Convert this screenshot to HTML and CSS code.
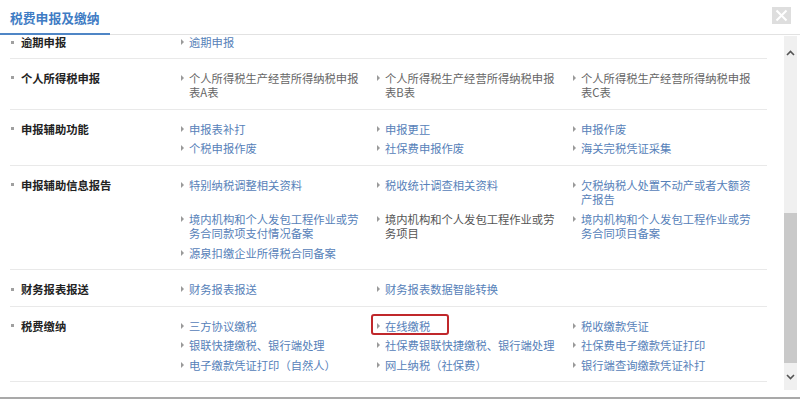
FILE: index.html
```html
<!DOCTYPE html>
<html lang="zh-CN">
<head>
<meta charset="utf-8">
<title>税费申报及缴纳</title>
<link rel="stylesheet" href="styles.css">
</head>
<body>
<div class="dialog">
  <div class="header">
    <div class="tab">税费申报及缴纳</div>
    <div class="close">
      <svg width="19" height="17" viewBox="0 0 19 17"><rect width="19" height="17" fill="#dedede"/><path d="M4.5 3.5 L14.5 13.5 M14.5 3.5 L4.5 13.5" stroke="#fff" stroke-width="2"/></svg>
    </div>
  </div>
  <div class="body">
    <div class="content">
      <div class="list">
        <div class="row first">
          <div class="label"><span class="sq"></span>逾期申报</div>
          <div class="grid">
            <div class="item"><span class="tri"></span><span class="t">逾期申报</span></div>
          </div>
        </div>
        <div class="row">
          <div class="label"><span class="sq"></span>个人所得税申报</div>
          <div class="grid">
            <div class="item gray"><span class="tri"></span><span class="t">个人所得税生产经营所得纳税申报表A表</span></div>
            <div class="item gray"><span class="tri"></span><span class="t">个人所得税生产经营所得纳税申报表B表</span></div>
            <div class="item gray"><span class="tri"></span><span class="t">个人所得税生产经营所得纳税申报表C表</span></div>
          </div>
        </div>
        <div class="row">
          <div class="label"><span class="sq"></span>申报辅助功能</div>
          <div class="grid">
            <div class="item"><span class="tri"></span><span class="t">申报表补打</span></div>
            <div class="item"><span class="tri"></span><span class="t">申报更正</span></div>
            <div class="item"><span class="tri"></span><span class="t">申报作废</span></div>
            <div class="item"><span class="tri"></span><span class="t">个税申报作废</span></div>
            <div class="item"><span class="tri"></span><span class="t">社保费申报作废</span></div>
            <div class="item"><span class="tri"></span><span class="t">海关完税凭证采集</span></div>
          </div>
        </div>
        <div class="row">
          <div class="label"><span class="sq"></span>申报辅助信息报告</div>
          <div class="grid">
            <div class="item"><span class="tri"></span><span class="t">特别纳税调整相关资料</span></div>
            <div class="item"><span class="tri"></span><span class="t">税收统计调查相关资料</span></div>
            <div class="item"><span class="tri"></span><span class="t">欠税纳税人处置不动产或者大额资产报告</span></div>
            <div class="item"><span class="tri"></span><span class="t">境内机构和个人发包工程作业或劳务合同款项支付情况备案</span></div>
            <div class="item dark"><span class="tri"></span><span class="t">境内机构和个人发包工程作业或劳务项目</span></div>
            <div class="item"><span class="tri"></span><span class="t">境内机构和个人发包工程作业或劳务合同项目备案</span></div>
            <div class="item"><span class="tri"></span><span class="t">源泉扣缴企业所得税合同备案</span></div>
          </div>
        </div>
        <div class="row">
          <div class="label"><span class="sq"></span>财务报表报送</div>
          <div class="grid">
            <div class="item"><span class="tri"></span><span class="t">财务报表报送</span></div>
            <div class="item"><span class="tri"></span><span class="t">财务报表数据智能转换</span></div>
          </div>
        </div>
        <div class="row">
          <div class="label"><span class="sq"></span>税费缴纳</div>
          <div class="grid">
            <div class="item"><span class="tri"></span><span class="t">三方协议缴税</span></div>
            <div class="item marked"><span class="tri"></span><span class="t">在线缴税</span><span class="redbox"></span></div>
            <div class="item"><span class="tri"></span><span class="t">税收缴款凭证</span></div>
            <div class="item"><span class="tri"></span><span class="t">银联快捷缴税、银行端处理</span></div>
            <div class="item"><span class="tri"></span><span class="t">社保费银联快捷缴税、银行端处理</span></div>
            <div class="item"><span class="tri"></span><span class="t">社保费电子缴款凭证打印</span></div>
            <div class="item"><span class="tri"></span><span class="t">电子缴款凭证打印（自然人）</span></div>
            <div class="item"><span class="tri"></span><span class="t">网上纳税（社保费）</span></div>
            <div class="item"><span class="tri"></span><span class="t">银行端查询缴款凭证补打</span></div>
          </div>
        </div>
      </div>
    </div>
    <div class="scrollbar">
      <div class="sb-btn sb-up">
        <svg width="9" height="6" viewBox="0 0 9 6"><path d="M1 5 L4.5 1.5 L8 5" fill="none" stroke="#555" stroke-width="1.6"/></svg>
      </div>
      <div class="sb-track"><div class="sb-thumb"></div></div>
      <div class="sb-btn sb-down">
        <svg width="9" height="6" viewBox="0 0 9 6"><path d="M1 1 L4.5 4.5 L8 1" fill="none" stroke="#555" stroke-width="1.6"/></svg>
      </div>
    </div>
  </div>
</div>
</body>
</html>
```

FILE: styles.css
```css
* { box-sizing: border-box; }

html, body {
  margin: 0;
  padding: 0;
  background: #fff;
}

body {
  width: 800px;
  height: 400px;
  overflow: hidden;
  font-family: "Noto Sans CJK SC", "Noto Sans", "Liberation Sans", sans-serif;
  font-size: 11.3px;
  line-height: 14.5px;
  color: #333;
}

.dialog {
  width: 800px;
  height: 400px;
  display: flex;
  flex-direction: column;
  padding-bottom: 1px;
}

.header {
  height: 35px;
  flex: none;
  display: flex;
  align-items: flex-start;
  justify-content: space-between;
  border-bottom: 1px solid #e2e2e2;
}

.tab {
  width: 110px;
  height: 35px;
  padding: 9px 0 0 10px;
  margin-bottom: -1px;
  border-bottom: 2px solid #4f86c6;
  color: #3f7cc4;
  font-size: 12.8px;
  line-height: 17px;
  font-weight: bold;
  white-space: nowrap;
}

.close {
  margin: 7px 9px 0 0;
  width: 19px;
  height: 17px;
}
.close svg { display: block; }

.body {
  flex: 1;
  display: flex;
  border-bottom: 2px solid #a9a9a9;
  min-height: 0;
}

.content {
  flex: 1;
  overflow: hidden;
  padding: 0 17px 0 10px;
}

.row {
  display: flex;
  padding: 12px 0 9px;
  border-bottom: 1px solid #e9e9e9;
}

.row.first {
  padding: 0 0 8px;
}

.label {
  width: 168px;
  flex: none;
  display: flex;
  align-items: center;
  align-self: flex-start;
  font-weight: bold;
  color: #222;
  white-space: nowrap;
}

.sq {
  width: 3px;
  height: 3px;
  background: #a0a0a0;
  margin: 0 7px 0 1px;
  flex: none;
}

.grid {
  display: grid;
  grid-template-columns: repeat(3, 196px);
  row-gap: 5px;
}

.item {
  display: flex;
  align-items: flex-start;
  padding-right: 10px;
  color: #5681b9;
  position: relative;
}

.item.gray { color: #666; }
.item.dark { color: #555; }

.tri {
  flex: none;
  width: 0;
  height: 0;
  margin: 4px 5px 0 3px;
  border-left: 3px solid #9a9a9a;
  border-top: 3px solid transparent;
  border-bottom: 3px solid transparent;
}

.t {
  flex: 1;
  min-width: 0;
}

.redbox {
  position: absolute;
  left: -3px;
  top: -4.5px;
  width: 78px;
  height: 21px;
  border: 2.3px solid #c0282b;
  border-radius: 3px;
}

.scrollbar {
  width: 13px;
  flex: none;
  margin: 1px 3px 7px 0;
  background: #f0f0f0;
  display: flex;
  flex-direction: column;
}

.sb-btn {
  display: flex;
  align-items: center;
  justify-content: center;
  flex: none;
}
.sb-btn svg { display: block; }

.sb-up { height: 34px; }
.sb-down { height: 26px; }

.sb-track {
  flex: 1;
  position: relative;
}

.sb-thumb {
  margin-top: 143px;
  height: 150px;
  background: #c9c9c9;
}
```
